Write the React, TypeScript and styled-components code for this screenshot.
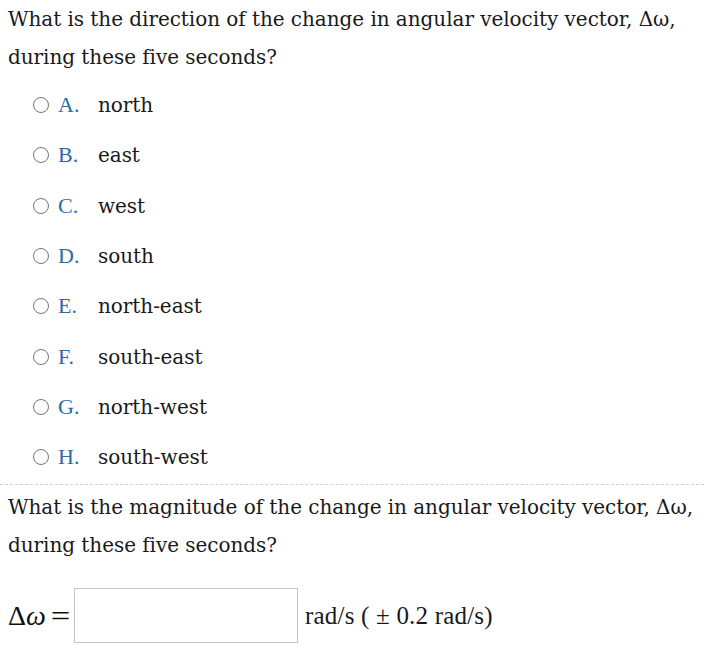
import React, { FC } from "react";
import styled, { createGlobalStyle } from "styled-components";

const GlobalStyle = createGlobalStyle`
  body {
    margin: 0;
    background: #fff;
    color: #1a1a1a;
    font-family: "DejaVu Serif", serif;
  }
`;

const Page = styled.div`
  width: 704px;
  padding: 0 0 0 8px;
  box-sizing: border-box;
`;

const Question = styled.p<{ top?: number }>`
  margin: 0;
  padding-top: ${({ top }) => top ?? 0}px;
  font-size: 20px;
  line-height: 38px;
  letter-spacing: -0.05px;
`;

const Options = styled.div`
  display: flex;
  flex-direction: column;
  padding: 4px 0 0 25px;
`;

const Option = styled.label`
  display: flex;
  align-items: center;
  height: 50.3px;
  cursor: pointer;
`;

const Radio = styled.span`
  width: 14px;
  height: 14px;
  border: 1.5px solid #767676;
  border-radius: 50%;
  box-sizing: content-box;
  flex-shrink: 0;
`;

const Letter = styled.span`
  font-family: "Liberation Serif", serif;
  font-size: 22px;
  color: #2d6aa8;
  width: 40px;
  margin-left: 9px;
`;

const Label = styled.span`
  font-size: 20px;
  letter-spacing: -0.05px;
`;

const Divider = styled.hr`
  border: none;
  border-top: 1px dashed #d0d0d0;
  margin: 2px 0 0 -8px;
`;

const AnswerRow = styled.div`
  display: flex;
  align-items: center;
  margin-top: 24px;
  height: 55px;
`;

const MathText = styled.span`
  font-family: "Liberation Serif", serif;
  font-size: 28px;
  color: #111;
  display: flex;
  align-items: center;
  gap: 6px;
  width: 66px;
`;

const Omega = styled.span`
  font-style: italic;
`;

const Equals = styled.span`
  font-size: 30px;
  transform: scaleX(1.15);
`;

const Input = styled.input`
  width: 224px;
  height: 55px;
  box-sizing: border-box;
  border: 1px solid #c4c4c4;
  outline: none;
  padding: 0 8px;
`;

const Units = styled.span`
  font-family: "Liberation Serif", serif;
  font-size: 25px;
  letter-spacing: 0.2px;
  margin-left: 7px;
  color: #1a1a1a;
  white-space: pre;
`;

const choices = [
  ["A.", "north"],
  ["B.", "east"],
  ["C.", "west"],
  ["D.", "south"],
  ["E.", "north-east"],
  ["F.", "south-east"],
  ["G.", "north-west"],
  ["H.", "south-west"],
];

const App: FC = () => {
  return (
    <Page>
      <GlobalStyle />
      <Question>
        What is the direction of the change in angular velocity vector, Δω,
        during these five seconds?
      </Question>
      <Options>
        {choices.map(([letter, text]) => (
          <Option key={letter}>
            <Radio />
            <Letter>{letter}</Letter>
            <Label>{text}</Label>
          </Option>
        ))}
      </Options>
      <Divider />
      <Question top={3}>
        What is the magnitude of the change in angular velocity vector, Δω,
        during these five seconds?
      </Question>
      <AnswerRow>
        <MathText>
          <span>
            Δ<Omega>ω</Omega>
          </span>
          <Equals>=</Equals>
        </MathText>
        <Input type="text" />
        <Units>rad/s ( ± 0.2 rad/s)</Units>
      </AnswerRow>
    </Page>
  );
};

export default App;
